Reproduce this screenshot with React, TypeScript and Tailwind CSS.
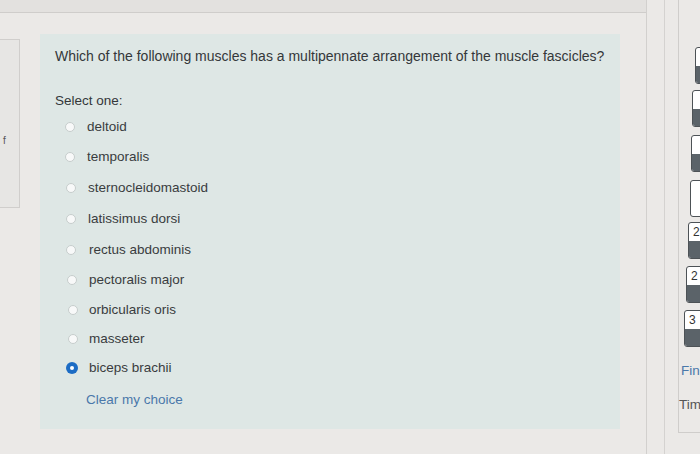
import React from "react";

const options = [
  { label: "deltoid", row: "h-[31px] pl-[25px]", gap: "ml-[12px]" },
  { label: "temporalis", row: "h-[30px] pl-[25px]", gap: "ml-[12px]" },
  { label: "sternocleidomastoid", row: "h-[31px] pl-[26px]", gap: "ml-[12px]" },
  { label: "latissimus dorsi", row: "h-[31px] pl-[26px]", gap: "ml-[12px]" },
  { label: "rectus abdominis", row: "h-[31px] pl-[26px]", gap: "ml-[13px]" },
  { label: "pectoralis major", row: "h-[30px] pl-[27px]", gap: "ml-[12px]" },
  { label: "orbicularis oris", row: "h-[29px] pl-[28px]", gap: "ml-[11px]" },
  { label: "masseter", row: "h-[29px] pl-[28px]", gap: "ml-[11px]" },
];

function Radio({ selected }: { selected?: boolean }) {
  if (selected) {
    return (
      <span className="flex h-[12px] w-[12px] shrink-0 items-center justify-center rounded-full bg-[#1c6cc4]">
        <span className="h-[4px] w-[4px] rounded-full bg-white" />
      </span>
    );
  }
  return (
    <span className="h-[10px] w-[10px] shrink-0 rounded-full border border-[#c6cdcc] bg-[#f8f9f9]" />
  );
}

function NavBtn({ num, dark = true, cls }: { num?: string; dark?: boolean; cls: string }) {
  return (
    <div className={`flex h-[37px] w-[30px] shrink-0 flex-col overflow-hidden rounded-[3px] border border-[#4d5256] bg-white ${cls}`}>
      <div className="flex h-[18px] items-center pl-[4px] text-[12px] leading-none text-[#333]">{num}</div>
      {dark && <div className="flex-1 bg-[#5b6369]" />}
    </div>
  );
}

export default function App() {
  return (
    <div className="flex h-[454px] w-[700px] overflow-hidden bg-[#ebe9e7] font-['Liberation_Sans',Arial,sans-serif]">
      {/* main column */}
      <div className="flex w-[647px] shrink-0 flex-col border-r border-[#d2d0ce]">
        <div className="h-[13px] shrink-0 border-b border-[#cfcdcb] bg-[#e3e1df]" />
        <div className="flex flex-1">
          <div className="relative mt-[26px] h-[169px] w-[20px] shrink-0 border-y border-r border-[#d0cecc] bg-[#e7e6e4]">
            <span className="absolute left-[3px] top-[96px] text-[10px] leading-none text-[#555]">f</span>
          </div>
          <div className="ml-[20px] mt-[21px] h-[395px] w-[580px] shrink-0 bg-[#dee7e5] pl-[15px] pt-[12px]">
            <p className="whitespace-nowrap text-[14px] leading-[20px] text-[#34373a]">
              Which of the following muscles has a multipennate arrangement of the muscle fascicles?
            </p>
            <p className="mt-[25px] text-[13.5px] leading-[20px] text-[#34373a]">Select one:</p>
            <div className="-ml-[15px] flex flex-col">
              {options.map((o) => (
                <div key={o.label} className={`flex items-center ${o.row}`}>
                  <Radio />
                  <span className={`${o.gap} text-[13.5px] leading-[20px] text-[#393c3e]`}>{o.label}</span>
                </div>
              ))}
              <div className="flex h-[29px] items-center pl-[26px]">
                <Radio selected />
                <span className="ml-[11px] text-[13.5px] leading-[20px] text-[#393c3e]">biceps brachii</span>
              </div>
              <div className="mt-[8px] pl-[46px] text-[13.5px] leading-[20px] text-[#4a78aa]">Clear my choice</div>
            </div>
          </div>
        </div>
      </div>
      {/* separator lines */}
      <div className="w-[18px] shrink-0 border-r border-[#d4d2d0]" />
      <div className="w-[13px] shrink-0" />
      {/* sidebar */}
      <div className="flex h-[433px] flex-1 flex-col border-b border-l border-[#cfcdcb] pl-[2px]">
        <NavBtn cls="mt-[47px] ml-[14px]" />
        <NavBtn cls="mt-[6px] ml-[11px]" />
        <NavBtn cls="mt-[8px] ml-[10px]" />
        <NavBtn cls="mt-[8px] ml-[9px]" dark={false} />
        <NavBtn num="2" cls="mt-[5px] ml-[7px]" />
        <NavBtn num="2" cls="mt-[7px] ml-[5px]" />
        <NavBtn num="3" cls="mt-[7px] ml-[3px]" />
        <div className="mt-[14px] text-[13.5px] leading-[20px] text-[#4a78aa]">Fin</div>
        <div className="mt-[14px] -ml-[2px] text-[13.5px] leading-[20px] text-[#555]">Tim</div>
      </div>
    </div>
  );
}
